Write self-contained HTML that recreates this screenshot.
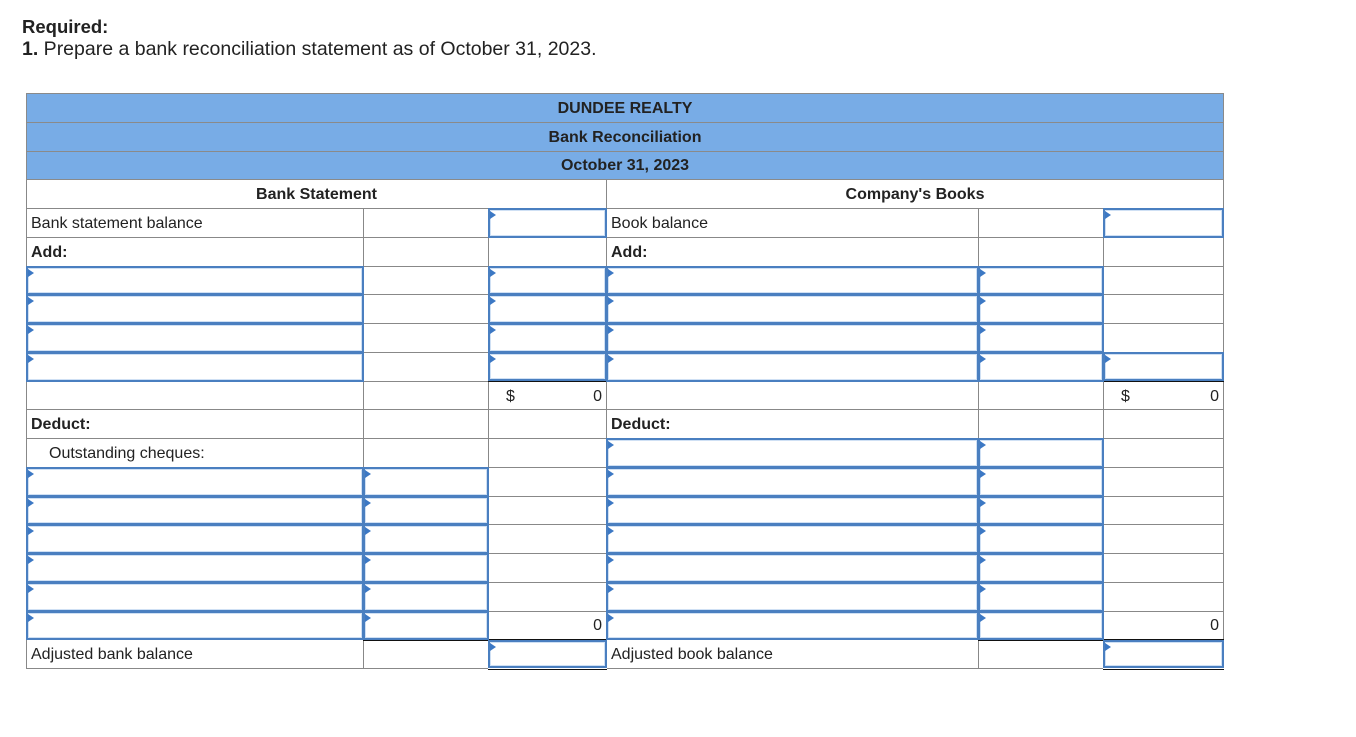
<!DOCTYPE html>
<html><head><style>
body{margin:0;background:#fff;font-family:"Liberation Sans",Arial,sans-serif;color:#222;width:1356px;height:737px;overflow:hidden}
.h1{position:absolute;left:22px;top:16px;font-size:18.5px;font-weight:bold}
.h2{position:absolute;left:22px;top:38px;font-size:19.5px}
table{position:absolute;left:26px;top:93px;border-collapse:collapse;table-layout:fixed;width:1197px}
td{border:1px solid #888;padding:2px 4px 0;font-size:16px;position:relative;white-space:nowrap;overflow:visible}
tr{height:28.75px}
.hd td{background:#78ace6;text-align:center;font-weight:bold;border-color:#8a8a8a}
.b{font-weight:bold}
.c{text-align:center;font-weight:bold}
.r{text-align:right}
.i::after{content:"";position:absolute;left:-1px;top:-1px;right:-1px;bottom:-1px;border:2px solid #4a7fc0;box-shadow:inset 0 0 0 1px #cfe0f4}
.i::before{content:"";position:absolute;left:1px;top:2px;border-left:6px solid #3c78c4;border-top:4px solid transparent;border-bottom:4px solid transparent;z-index:2}
.tb{border-top:2px solid #111}
.db{border-bottom:3px double #111}
</style></head><body>
<div class="h1">Required:</div>
<div class="h2"><b>1.</b> Prepare a bank reconciliation statement as of October 31, 2023.</div>
<table>
<colgroup><col style="width:337px"><col style="width:125px"><col style="width:118px"><col style="width:372px"><col style="width:125px"><col style="width:120px"></colgroup>
<tr class="hd"><td colspan="6">DUNDEE REALTY</td></tr>
<tr class="hd"><td colspan="6">Bank Reconciliation</td></tr>
<tr class="hd"><td colspan="6">October 31, 2023</td></tr>
<tr><td colspan="3" class="c">Bank Statement</td><td colspan="3" class="c">Company's Books</td></tr>
<tr><td>Bank statement balance</td><td></td><td class="i"></td><td>Book balance</td><td></td><td class="i"></td></tr>
<tr><td class="b">Add:</td><td></td><td></td><td class="b">Add:</td><td></td><td></td></tr>
<tr><td class="i"></td><td></td><td class="i"></td><td class="i"></td><td class="i"></td><td></td></tr>
<tr><td class="i"></td><td></td><td class="i"></td><td class="i"></td><td class="i"></td><td></td></tr>
<tr><td class="i"></td><td></td><td class="i"></td><td class="i"></td><td class="i"></td><td></td></tr>
<tr><td class="i"></td><td></td><td class="i"></td><td class="i"></td><td class="i"></td><td class="i"></td></tr>
<tr><td></td><td></td><td class="tb"><span style="margin-left:13px">$</span><span style="float:right">0</span></td><td></td><td></td><td class="tb"><span style="margin-left:13px">$</span><span style="float:right">0</span></td></tr>
<tr><td class="b">Deduct:</td><td></td><td></td><td class="b">Deduct:</td><td></td><td></td></tr>
<tr><td style="padding-left:22px">Outstanding cheques:</td><td></td><td></td><td class="i"></td><td class="i"></td><td></td></tr>
<tr><td class="i"></td><td class="i"></td><td></td><td class="i"></td><td class="i"></td><td></td></tr>
<tr><td class="i"></td><td class="i"></td><td></td><td class="i"></td><td class="i"></td><td></td></tr>
<tr><td class="i"></td><td class="i"></td><td></td><td class="i"></td><td class="i"></td><td></td></tr>
<tr><td class="i"></td><td class="i"></td><td></td><td class="i"></td><td class="i"></td><td></td></tr>
<tr><td class="i"></td><td class="i"></td><td></td><td class="i"></td><td class="i"></td><td></td></tr>
<tr><td class="i"></td><td class="i"></td><td class="r">0</td><td class="i"></td><td class="i"></td><td class="r">0</td></tr>
<tr><td>Adjusted bank balance</td><td class="tb"></td><td class="i tb db"></td><td>Adjusted book balance</td><td class="tb"></td><td class="i tb db"></td></tr>
</table>
</body></html>
